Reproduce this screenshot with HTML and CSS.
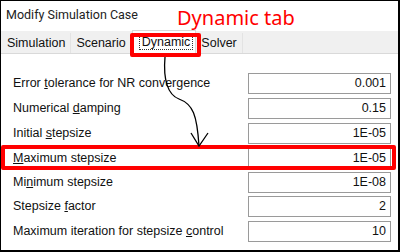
FILE: index.html
```html
<!DOCTYPE html>
<html>
<head>
<meta charset="utf-8">
<link rel="stylesheet" href="styles.css">
</head>
<body>
<div class="window">
  <div class="titlebar">Modify Simulation Case</div>
  <div class="tabs">
    <div class="tab">Simulation</div>
    <div class="tab">Scenario</div>
    <div class="tab selected"><span class="focus">Dynamic</span></div>
    <div class="tab">Solver</div>
  </div>
  <div class="form">
    <div class="label">Error <u>t</u>olerance for NR convergence</div><div class="field">0.001</div>
    <div class="label">Numerical <u>d</u>amping</div><div class="field">0.15</div>
    <div class="label">Initial <u>s</u>tepsize</div><div class="field">1E-05</div>
    <div class="label"><u>M</u>aximum stepsize</div><div class="field">1E-05</div>
    <div class="label">Mi<u>n</u>imum stepsize</div><div class="field">1E-08</div>
    <div class="label">Stepsize <u>f</u>actor</div><div class="field">2</div>
    <div class="label">Maximum iteration for stepsize <u>c</u>ontrol</div><div class="field">10</div>
  </div>
  <div class="annot">
    <div class="note">Dynamic tab</div>
    <div class="hl hl-tab"></div>
    <div class="hl hl-row"></div>
    <svg class="arrow" width="400" height="252" viewBox="0 0 400 252">
      <path d="M165 57 C 163 80, 168 95, 179 99 C 193 104, 197 115, 199 146" fill="none" stroke="#000" stroke-width="1.3"/>
      <path d="M191 133 L199 146 L208 133" fill="none" stroke="#000" stroke-width="1.3"/>
    </svg>
  </div>
</div>
</body>
</html>
```
FILE: styles.css
```css
html, body {
  margin: 0;
  padding: 0;
  background: #fff;
}
.window {
  position: relative;
  box-sizing: border-box;
  width: 400px;
  height: 252px;
  border-style: solid;
  border-color: #000;
  border-width: 1px 2px 2px 1px;
  background: #fff;
  font-family: "Liberation Sans", Arial, sans-serif;
  font-size: 12.5px;
  color: #111;
  overflow: hidden;
}
.titlebar {
  height: 30px;
  line-height: 28px;
  padding-left: 5px;
  font-family: Roboto, "Noto Sans", sans-serif;
  font-size: 12.5px;
  color: #222;
}
.tabs {
  display: flex;
  align-items: flex-end;
  height: 22px;
  background: #f0f0f0;
  border-bottom: 1px solid #d9d9d9;
  padding-left: 1px;
}
.tab {
  height: 20px;
  line-height: 20px;
  padding: 0 5px;
  border-right: 1px solid #e3e3e3;
  color: #111;
}
.tab.selected {
  height: 23px;
  line-height: 22px;
  margin-bottom: -1px;
  background: #fff;
  padding: 0 3px 0 7px;
  border: 1px solid #d9d9d9;
  border-bottom: none;
}
.focus {
  outline: 1px dotted #333;
  outline-offset: 0;
  padding: 0 2px;
}
.form {
  display: grid;
  grid-template-columns: 1fr 143px;
  grid-template-rows: 25px 25px 25px 24px 24px 25px 21px;
  padding: 19px 7px 0 12px;
}
.label {
  height: 21px;
  line-height: 21px;
}
.field {
  box-sizing: border-box;
  height: 21px;
  line-height: 19px;
  border: 1px solid #9a9a9a;
  text-align: right;
  padding-right: 4px;
  color: #111;
}
.annot {
  position: absolute;
  left: -1px;
  top: -1px;
  width: 400px;
  height: 252px;
  pointer-events: none;
}
.note {
  position: absolute;
  left: 177px;
  top: 4px;
  font-family: "Noto Sans", sans-serif;
  font-size: 20px;
  color: #ff0000;
  line-height: 27px;
}
.hl {
  position: absolute;
  box-sizing: border-box;
  border: 4px solid #ff0000;
  border-radius: 2px;
}
.hl-tab {
  left: 130px;
  top: 33px;
  width: 71px;
  height: 24px;
}
.hl-row {
  left: 1px;
  top: 145px;
  width: 395px;
  height: 25px;
}
.arrow {
  position: absolute;
  left: 0;
  top: 0;
}
```
